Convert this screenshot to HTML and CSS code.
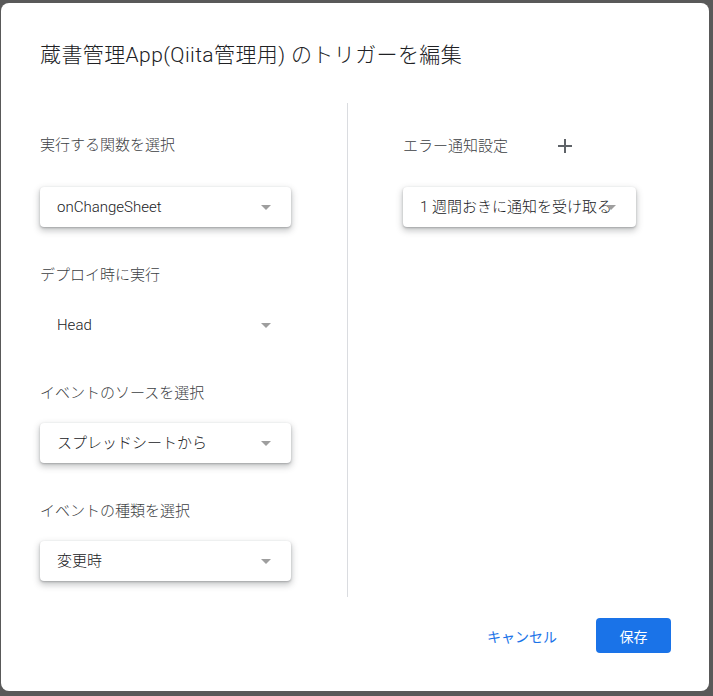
FILE: index.html
```html
<!DOCTYPE html>
<html lang="ja">
<head>
    <meta charset="UTF-8">
    <meta name="viewport" content="width=device-width, initial-scale=1.0">
    <title>トリガーを編集</title>
    <link rel="stylesheet" href="styles.css">
</head>
<body>
    <div class="dialog">
        <h1 class="dialog-title">蔵書管理App(Qiita管理用) のトリガーを編集</h1>

        <div class="dialog-body">
            <!-- 左側: 関数とイベントの設定 -->
            <div class="col col-left">
                <div class="field field-first">
                    <div class="label">実行する関数を選択</div>
                    <div class="select raised">onChangeSheet<span class="arrow"></span></div>
                </div>
                <div class="field">
                    <div class="label">デプロイ時に実行</div>
                    <div class="select">Head<span class="arrow"></span></div>
                </div>
                <div class="field">
                    <div class="label">イベントのソースを選択</div>
                    <div class="select raised">スプレッドシートから<span class="arrow"></span></div>
                </div>
                <div class="field">
                    <div class="label">イベントの種類を選択</div>
                    <div class="select raised">変更時<span class="arrow"></span></div>
                </div>
            </div>

            <!-- 右側: エラー通知 -->
            <div class="col col-right">
                <div class="field field-first">
                    <div class="label label-row">エラー通知設定
                        <svg class="plus" width="14" height="14" viewBox="0 0 14 14">
                            <path d="M7 0v14M0 7h14" stroke="#5f6368" stroke-width="2"/>
                        </svg>
                    </div>
                    <div class="select raised select-narrow">1 週間おきに通知を受け取る<span class="arrow"></span></div>
                </div>
            </div>
        </div>

        <div class="dialog-footer">
            <button class="btn btn-text">キャンセル</button>
            <button class="btn btn-primary">保存</button>
        </div>
    </div>
</body>
</html>
```

FILE: styles.css
```css
body {
    margin: 0;
    height: 696px;
    padding: 3px 0 0 1px;
    box-sizing: border-box;
    background: #595959;
    font-family: Roboto, "Noto Sans CJK JP", sans-serif;
    font-weight: 300;
    color: #3c4043;
    overflow: hidden;
}
.dialog {
    width: 708px;
    height: 688px;
    background: #fff;
    border-radius: 8px;
    box-sizing: border-box;
    padding: 38px 38px 0 39px;
    display: flex;
    flex-direction: column;
}
.dialog-title {
    margin: 0;
    font-size: 21px;
    font-weight: 300;
    line-height: 28px;
    letter-spacing: 0.4px;
    color: #202124;
}
.dialog-body {
    display: flex;
    margin-top: 34px;
    height: 494px;
}
.col {
    display: flex;
    flex-direction: column;
}
.col-left {
    width: 307px;
    border-right: 1px solid #dadce0;
    padding-top: 32px;
    gap: 38px;
}
.col-right {
    padding-left: 55px;
    padding-top: 33px;
}
.field {
    display: flex;
    flex-direction: column;
    gap: 20px;
}
.field-first {
    gap: 32px;
}
.col-right .field-first {
    gap: 31px;
}
.label {
    font-size: 15px;
    line-height: 20px;
    color: #3c4043;
}
.label-row {
    display: flex;
    align-items: center;
}
.plus {
    margin-left: 50px;
}
.select {
    position: relative;
    width: 251px;
    height: 40px;
    box-sizing: border-box;
    padding-left: 17px;
    font-size: 15px;
    line-height: 40px;
    color: #202124;
    border-radius: 4px;
    white-space: nowrap;
}
.select-narrow {
    width: 233px;
}
.raised {
    box-shadow: 0 1px 2px rgba(60, 64, 67, 0.3), 0 3px 6px 1px rgba(60, 64, 67, 0.28);
}
.arrow {
    position: absolute;
    right: 20px;
    top: 18px;
    border-left: 5px solid transparent;
    border-right: 5px solid transparent;
    border-top: 5px solid #9e9e9e;
}
.dialog-footer {
    display: flex;
    justify-content: flex-end;
    align-items: center;
    gap: 39px;
    margin-top: 21px;
}
.btn {
    font-family: Roboto, "Noto Sans CJK JP", sans-serif;
    font-size: 14px;
    font-weight: 400;
    border: none;
    background: none;
    cursor: pointer;
    padding: 0;
}
.btn-text {
    color: #1a73e8;
}
.btn-primary {
    width: 75px;
    height: 35px;
    background: #1a73e8;
    color: #fff;
    border-radius: 4px;
}
```
